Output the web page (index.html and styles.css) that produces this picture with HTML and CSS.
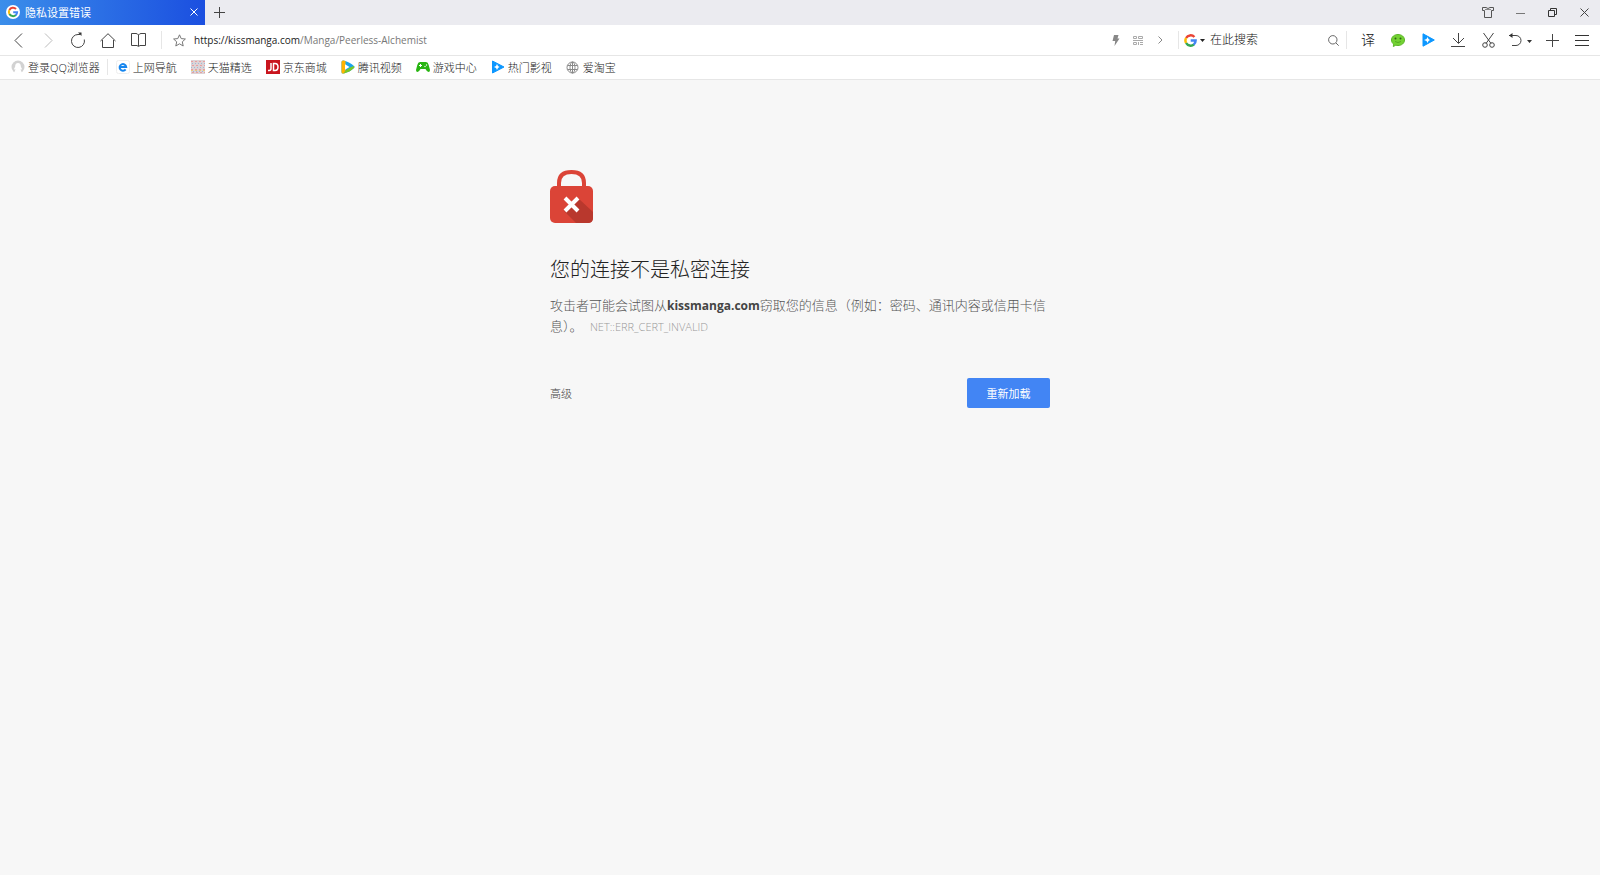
FILE: index.html
```html
<!DOCTYPE html>
<html lang="zh-CN">
<head>
    <meta charset="utf-8">
    <title>隐私设置错误</title>
    <meta name="viewport" content="width=device-width, initial-scale=1">
    <link rel="stylesheet" href="styles.css">
</head>
<body>
    <!-- tabs -->
    <header class="tabbar">
        <div class="tab">
            <svg width="14" height="14" viewBox="0 0 14 14">
                <circle cx="7" cy="7" r="7" fill="#fff"/>
                <g fill="none" stroke-width="2">
                    <path d="M3.4 4.9A4.2 4.2 0 0 1 10 4" stroke="#ea4335"/>
                    <path d="M3.4 9.1A4.2 4.2 0 0 1 3.4 4.9" stroke="#fbbc05"/>
                    <path d="M9.9 10A4.2 4.2 0 0 1 3.4 9.1" stroke="#34a853"/>
                    <path d="M7.2 7.2H11.1A4.2 4.2 0 0 1 9.7 10.2" stroke="#4285f4"/>
                </g>
            </svg>
            <span class="tab-title">隐私设置错误</span>
            <button class="tab-close" aria-label="关闭标签">
                <svg width="8" height="8" viewBox="0 0 8 8"><path d="M.5.5l7 7M7.5.5l-7 7" stroke="#fff"/></svg>
            </button>
        </div>
        <button class="icon-btn new-tab" aria-label="新标签页">
            <svg width="11" height="11" viewBox="0 0 11 11"><path d="M5.5 0v11M0 5.5h11" stroke="#444"/></svg>
        </button>
        <div class="window-btns">
            <button aria-label="皮肤">
                <svg width="12" height="11" viewBox="0 0 12 11"><path d="M.5.5h3.500q2 2 4 0h3.500v3h-2v7h-7v-7h-2z" fill="none" stroke="#555"/><path d="M3 2.500h6" stroke="#888"/></svg>
            </button>
            <button aria-label="最小化">
                <svg width="9" height="9" viewBox="0 0 9 9"><path d="M0 5.5h9" stroke="#777"/></svg>
            </button>
            <button aria-label="还原">
                <svg width="9" height="9" viewBox="0 0 9 9"><path d="M.5 2.500h6v6h-6zM2.500 2.500v-2h6v6h-2" fill="none" stroke="#333"/></svg>
            </button>
            <button aria-label="关闭">
                <svg width="9" height="9" viewBox="0 0 9 9"><path d="M.5.5l8 8M8.500.5l-8 8" stroke="#444"/></svg>
            </button>
        </div>
    </header>

    <!-- address bar -->
    <nav class="toolbar">
        <button class="icon-btn" aria-label="后退">
            <svg width="9" height="15" viewBox="0 0 9 15"><path d="M8 .5l-7 7 7 7" fill="none" stroke="#444"/></svg>
        </button>
        <button class="icon-btn" aria-label="前进">
            <svg width="9" height="15" viewBox="0 0 9 15"><path d="M1 .5l7 7-7 7" fill="none" stroke="#bbb"/></svg>
        </button>
        <button class="icon-btn" aria-label="刷新">
            <svg width="16" height="16" viewBox="0 0 16 16"><path d="M14.300 7.500A6.500 6.500 0 1 1 8 2.500h2" fill="none" stroke="#444"/><path d="M8 .5h3.500V4z" fill="#333"/></svg>
        </button>
        <button class="icon-btn" aria-label="主页">
            <svg width="16" height="15" viewBox="0 0 16 15"><path d="M.5 8L8 .7 15.500 8M2.500 7v7.500h11V7" fill="none" stroke="#444"/></svg>
        </button>
        <button class="icon-btn" aria-label="阅读">
            <svg width="15" height="14" viewBox="0 0 15 14"><path d="M7.500 2Q6.500.5 5 .5H.5v12H6l1.500 1 1.500-1h5.500V.5H10Q8.500.5 7.500 2v11" fill="none" stroke="#444"/></svg>
        </button>
        <div class="address">
            <button class="star" aria-label="收藏">
                <svg width="13" height="13" viewBox="0 0 13 13"><path d="M6.500.8l1.700 3.800 4.200.4-3.100 2.800.9 4.200-3.700-2.200-3.700 2.200.9-4.200L.6 5l4.200-.4z" fill="none" stroke="#777"/></svg>
            </button>
            <a class="url" href="#">https://kissmanga.com<span>/Manga/Peerless-Alchemist</span></a>
            <button class="addr-btn" aria-label="加速">
                <svg width="8" height="11" viewBox="0 0 8 11"><path d="M2 0h4.500L5.500 3.500H7.500L2.500 11l.7-5H.5z" fill="#888"/></svg>
            </button>
            <button class="addr-btn" aria-label="二维码">
                <svg width="10" height="9" viewBox="0 0 10 9"><path d="M.5.5h3v2h-3zM5.500.5h4v2h-4zM0 4.500h10M.5 6.500h3v2h-3zM5.500 6v3M7 6.500h3M7 8.500h3" fill="none" stroke="#aaa"/></svg>
            </button>
            <button class="addr-btn" aria-label="展开">
                <svg width="5" height="8" viewBox="0 0 5 8"><path d="M.5.5L4 4 .5 7.500" fill="none" stroke="#888"/></svg>
            </button>
        </div>
        <div class="search">
            <svg width="13" height="13" viewBox="0 0 13 13" fill="none" stroke-width="2.500">
                <path d="M2.100 4A5.200 5.200 0 0 1 10.400 3" stroke="#ea4335"/>
                <path d="M2.100 9A5.200 5.200 0 0 1 2.100 4" stroke="#fbbc05"/>
                <path d="M10 10.400A5.200 5.200 0 0 1 2.100 9" stroke="#34a853"/>
                <path d="M6.700 6.500H11.600A5.200 5.200 0 0 1 9.700 10.600" stroke="#4285f4"/>
            </svg>
            <svg width="5" height="3" viewBox="0 0 5 3"><path d="M0 0h5L2.500 3z" fill="#222"/></svg>
            <input type="text" aria-label="搜索" placeholder="在此搜索">
            <button aria-label="搜索">
                <svg width="11" height="11" viewBox="0 0 11 11"><circle cx="4.800" cy="4.800" r="4.200" fill="none" stroke="#666"/><path d="M8 8l2.700 2.700" stroke="#666"/></svg>
            </button>
        </div>
        <div class="tools">
            <button class="icon-btn translate">译</button>
            <button class="icon-btn" aria-label="微信">
                <svg width="14" height="13" viewBox="0 0 14 13">
                    <path d="M7 .5c3.700 0 6.500 2.300 6.500 5.500S10.700 11.500 7 11.500c-.8 0-1.500-.1-2.200-.3L2.300 12.500l.3-2.300C1.300 9.200.5 7.700.5 6 .5 2.800 3.300.5 7 .5z" fill="#73d233" stroke="#5cb52a"/>
                    <circle cx="4.500" cy="4.500" r="1" fill="#2f6312"/><circle cx="9.500" cy="4.500" r="1" fill="#2f6312"/>
                    <path d="M4 7.500q3 2 6 0" fill="none" stroke="#55a824"/>
                </svg>
            </button>
            <button class="icon-btn" aria-label="视频">
                <svg width="13" height="14" viewBox="0 0 13 14"><path d="M1 .8l11.300 6.200L1 13.200z" fill="#0c97ff" stroke="#0c97ff" stroke-linejoin="round"/><path d="M2 7l2.500-1L5.500 4l1 2L8 7 6.500 8l-1 2-1-2z" fill="#fff"/></svg>
            </button>
            <button class="icon-btn" aria-label="下载">
                <svg width="14" height="14" viewBox="0 0 14 14"><path d="M7.500 0v10M2 5l5.500 5.500L13 5M0 13.500h14" fill="none" stroke="#444"/></svg>
            </button>
            <button class="icon-btn" aria-label="截图">
                <svg width="13" height="15" viewBox="0 0 13 15"><path d="M1.500 0l7.500 10.500M11.500 0L4 10.500" stroke="#444"/><g fill="none" stroke="#444"><circle cx="3" cy="12" r="2.300"/><circle cx="10" cy="12" r="2.300"/></g></svg>
            </button>
            <button class="icon-btn undo" aria-label="撤销">
                <svg width="24" height="14" viewBox="0 0 24 14"><path d="M1 2.500h7a5 5 0 0 1 0 10H4" fill="none" stroke="#444"/><path d="M4.500 0v5L1 2.500zM19 7h5l-2.500 3z" fill="#333"/></svg>
            </button>
            <button class="icon-btn" aria-label="添加">
                <svg width="13" height="13" viewBox="0 0 13 13"><path d="M6.500 0v13M0 6.500h13" stroke="#444"/></svg>
            </button>
            <button class="icon-btn" aria-label="菜单">
                <svg width="14" height="11" viewBox="0 0 14 11"><path d="M0 .5h14M0 5.500h14M0 10.500h14" stroke="#333"/></svg>
            </button>
        </div>
    </nav>

    <!-- bookmarks -->
    <nav class="bookmarks">
        <a class="login" href="#">
            <svg width="14" height="14" viewBox="0 0 14 14"><circle cx="7" cy="7" r="6.500" fill="#d2d2d2"/><path d="M7 3c2 0 2.800 1.500 2.800 3.300 0 1 1.200 1.700 1.200 3.200L9.500 9.300 11 13q-4 2-8 0l1.500-3.700L3 9.500C3 8 4.200 7.300 4.200 6.300 4.200 4.500 5 3 7 3z" fill="#fff"/></svg>
            登录QQ浏览器
        </a>
        <a href="#">
            <svg width="14" height="14" viewBox="0 0 14 14"><rect x=".5" y=".5" width="13" height="13" rx="2" fill="#fff" stroke="#eee"/><path d="M3.500 7H10.200A3.300 3.300 0 1 0 9.600 9.300" fill="none" stroke="#1585ee" stroke-width="2"/></svg>
            上网导航
        </a>
        <a href="#">
            <svg width="14" height="14" viewBox="0 0 14 14">
                <path d="M0 0h14v14H0z" fill="#ddd3d6"/>
                <path d="M0 1.500h14M1 5.500h13M0 9.500h14M1 12.500h13" stroke="#e8a0a0" stroke-dasharray="2 2"/>
                <path d="M1 3.500h13M0 7.500h14M2 11.500h12" stroke="#9fbad6" stroke-dasharray="1 2"/>
                <path d="M0 10.500h14" stroke="#e8c980" stroke-dasharray="2 2"/>
            </svg>
            天猫精选
        </a>
        <a href="#">
            <svg width="14" height="14" viewBox="0 0 14 14"><path d="M0 0h14v14H0z" fill="#c9151e"/><path d="M5 3v5.500Q5 10.500 3.200 10.500H2M7.500 3.500v7H9q3 0 3-3.500T9 3.500z" fill="none" stroke="#fff" stroke-width="1.500"/></svg>
            京东商城
        </a>
        <a href="#">
            <svg width="14" height="14" viewBox="0 0 14 14"><path d="M.5 2Q.5.2 2.500.5 9 2 13 6q1 1 0 2-4 4-10.500 5.500Q.5 14 .5 12z" fill="#1ba4ea"/><path d="M.5 2Q.5.2 2.500.5L4.500 1v12l-2 .5Q.5 14 .5 12z" fill="#ffb400"/><path d="M2.500 13.500Q9 12 13 8q1-1 0-2L9 7.500 4 11z" fill="#7cc824"/><path d="M4 4.200v5.600L8.500 7z" fill="#fff"/></svg>
            腾讯视频
        </a>
        <a href="#">
            <svg width="14" height="14" viewBox="0 0 14 14"><path d="M4 2h6q2 0 2.700 3L14 10q0 2-1.500 2Q11 12 9.500 9h-5Q3 12 1.500 12 0 12 0 10l1.300-5Q2 2 4 2z" fill="#28b512"/><path d="M3 5.500h3M4.500 4v3" stroke="#fff"/><circle cx="9" cy="6.500" r=".7" fill="#fff"/><circle cx="10.500" cy="5" r=".7" fill="#fff"/></svg>
            游戏中心
        </a>
        <a href="#">
            <svg width="14" height="14" viewBox="0 0 14 14"><path d="M1.500 1L13 7 1.500 13z" fill="#0c97ff" stroke="#0c97ff" stroke-linejoin="round"/><path d="M3 7l2-1 1-2 1 2 1.500 1L7 8l-1 2-1-2z" fill="#fff"/></svg>
            热门影视
        </a>
        <a href="#">
            <svg width="14" height="14" viewBox="0 0 14 14" fill="none" stroke="#888"><circle cx="6.500" cy="7.500" r="5.500"/><ellipse cx="6.500" cy="7.500" rx="2.500" ry="5.500"/><path d="M6.500 2v11M1.500 5.500h10M1.500 9.500h10"/></svg>
            爱淘宝
        </a>
    </nav>

    <!-- warning page -->
    <main class="warning">
        <svg width="43" height="54" viewBox="0 0 43 54">
            <path d="M9 17V13Q9 2 21.500 2T34 13v4" fill="none" stroke="#db4437" stroke-width="4"/>
            <rect y="16" width="43" height="37" rx="5" fill="#db4437"/>
            <path d="M28 28L43 42v6q0 5-5 5H26L14 41z" fill="#b9382d"/>
            <path d="M15 28l13 13M28 28L15 41" stroke="#fff" stroke-width="4"/>
        </svg>
        <h1>您的连接不是私密连接</h1>
        <p>攻击者可能会试图从<strong>kissmanga.com</strong>窃取您的信息（例如：密码、通讯内容或信用卡信息）。 <span class="code">NET::ERR_CERT_INVALID</span></p>
        <div class="actions">
            <a href="#">高级</a>
            <button class="reload">重新加载</button>
        </div>
    </main>
</body>
</html>
```

FILE: styles.css
```css
* {
    box-sizing: border-box;
}
body {
    margin: 0;
    background-color: #f7f7f7;
    color: #333;
    font-family: "Open Sans", "Noto Sans CJK SC", sans-serif;
    font-size: 11px;
}
button {
    padding: 0;
    border: none;
    background: none;
    color: inherit;
    font: inherit;
    cursor: pointer;
}
a {
    color: inherit;
    text-decoration: none;
}
svg {
    display: block;
    flex: none;
}

/* tabs */
.tabbar {
    display: flex;
    height: 25px;
    background-color: #ebebf0;
}
.tab {
    display: flex;
    align-items: center;
    gap: 5px;
    width: 205px;
    padding: 0 7px 1px 6px;
    background: linear-gradient(to right, #3b8eea, #1b4fe0);
    color: #fff;
}
.tab-title {
    flex: 1;
    padding-bottom: 1px;
}
.icon-btn,
.window-btns button {
    display: flex;
    align-items: center;
    justify-content: center;
    width: 30px;
}
.new-tab {
    width: 28px;
}
.window-btns {
    display: flex;
    margin-left: auto;
}
.window-btns button {
    width: 32px;
}

/* address bar */
.toolbar {
    display: flex;
    height: 31px;
    padding: 0 3px;
    background-color: #fff;
    border-bottom: 1px solid #e6e6e6;
}
.address,
.search,
.tools {
    display: flex;
}
.address {
    flex: 1;
    align-items: center;
    height: 18px;
    margin: 6px 0 6px 8px;
    padding-left: 11px;
    border-left: 1px solid #e6e6e6;
}
.star {
    margin-right: 8px;
}
.url {
    flex: 1;
    color: #222;
    font-size: 10px;
}
.url span {
    color: #777;
}
.addr-btn {
    display: flex;
    justify-content: center;
    width: 22px;
}
.search {
    align-items: center;
    width: 169px;
    height: 18px;
    margin: 6px 6px 6px 7px;
    padding: 0 7px 0 5px;
    gap: 3px;
    border: 1px solid #e6e6e6;
    border-width: 0 1px;
}
.search input {
    flex: 1;
    min-width: 0;
    padding: 0 0 1px 2px;
    border: none;
    outline: none;
    font-family: inherit;
    font-size: 12px;
    font-weight: 300;
}
.search input::placeholder {
    color: #111;
}
.translate {
    padding-bottom: 2px;
    font-size: 14px;
    font-weight: 300;
    color: #111;
}
.icon-btn.undo {
    width: 34px;
}

/* bookmarks */
.bookmarks {
    display: flex;
    align-items: center;
    gap: 14px;
    height: 24px;
    padding: 0 0 2px 11px;
    background-color: #fff;
    border-bottom: 1px solid #e6e6e6;
    color: #222;
    font-weight: 300;
}
.bookmarks a {
    display: flex;
    align-items: center;
    gap: 3px;
}
.bookmarks .login {
    padding-right: 7px;
    margin-right: -6px;
    border-right: 1px solid #e6e6e6;
}

/* warning page */
.warning {
    max-width: 500px;
    margin: 0 auto;
    padding-top: 90px;
}
.warning h1 {
    margin: 32px 0 11px;
    color: #222;
    font-size: 20px;
    font-weight: 300;
    line-height: 28px;
}
.warning p {
    margin: 0;
    color: #555;
    font-size: 13px;
    font-weight: 300;
    line-height: 20px;
}
.warning strong {
    color: #444;
    font-size: 12px;
    font-weight: 700;
}
.code {
    margin-left: 4px;
    color: #999;
    font-size: 11px;
}
.actions {
    display: flex;
    align-items: center;
    justify-content: space-between;
    margin-top: 41px;
    color: #444;
    font-weight: 300;
}
.reload {
    width: 83px;
    height: 30px;
    border-radius: 2px;
    background-color: #4285f4;
    color: #fff;
    font-weight: 400;
}
```
